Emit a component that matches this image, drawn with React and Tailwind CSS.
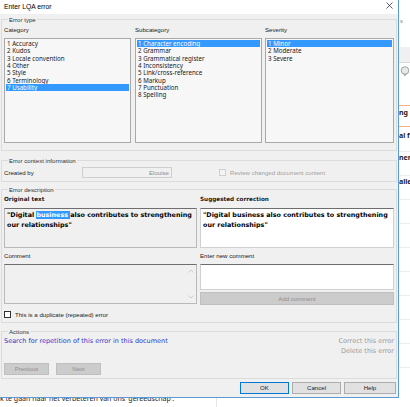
import React from 'react';

const categories = ['1 Accuracy', '2 Kudos', '3 Locale convention', '4 Other', '5 Style', '6 Terminology', '7 Usability'];
const subcategories = [
  '1 Character encoding',
  '2 Grammar',
  '3 Grammatical register',
  '4 Inconsistency',
  '5 Link/cross-reference',
  '6 Markup',
  '7 Punctuation',
  '8 Spelling',
];
const severities = ['1 Minor', '2 Moderate', '3 Severe'];

function ListBox({ items, selected, className = '' }) {
  return (
    <div className={`flex h-[105px] flex-col border border-[#a9a9a9] bg-[#f7f7f7] px-px pt-[1px] font-['Noto_Sans',sans-serif] ${className}`}>
      {items.map((t, i) => (
        <div
          key={t}
          className={`h-[7.33px] shrink-0 whitespace-nowrap pl-[1px] text-[6.2px] leading-[7.33px] ${
            i === selected ? 'bg-[#3399ff] text-white' : 'text-[#1a1a1a]'
          }`}
        >
          {t}
        </div>
      ))}
    </div>
  );
}

function Group({ label, className = '', children }) {
  return (
    <div className={`border border-[#dcdcdc] px-[2px] ${className}`}>
      <div className="-mt-[5px] ml-[4px] h-[9px] w-fit bg-[#f0f0f0] px-px leading-[9px] text-[#333]">{label}</div>
      {children}
    </div>
  );
}

function Checkbox({ disabled }) {
  return (
    <span
      className={`inline-block h-[7px] w-[7px] shrink-0 border ${
        disabled ? 'border-[#cfcfcf] bg-[#f4f4f4]' : 'border-[#333] bg-white'
      }`}
    />
  );
}

function GrayButton({ children, className = '' }) {
  return (
    <div
      className={`flex items-center justify-center border border-[#bfbfbf] bg-[#cccccc] text-[#8e8e8e] ${className}`}
    >
      {children}
    </div>
  );
}

function Dialog() {
  return (
    <div className="flex h-[398px] w-[399px] shrink-0 flex-col border-r border-b border-[#5b9bd5] bg-[#f0f0f0] font-['Liberation_Sans',sans-serif] text-[6.1px] text-[#1a1a1a]">
      {/* title bar */}
      <div className="flex h-[14px] shrink-0 items-center justify-between bg-white pl-[4px] pr-[5px]">
        <span className="text-[6.8px] leading-[14px] text-black">Enter LQA error</span>
        <svg width="7" height="7" viewBox="0 0 7 7" className="mb-[4px]">
          <path d="M0.5 0.5 L6.5 6.5 M6.5 0.5 L0.5 6.5" stroke="#333" strokeWidth="0.8" />
        </svg>
      </div>

      <div className="flex flex-1 flex-col px-px">
        {/* Error type */}
        <Group label="Error type" className="mt-[5px] pb-[7px]">
          <div className="flex gap-[4px]">
            <div className="flex w-[127px] flex-col">
              <div className="mt-[1px] h-[9px] leading-[9px]">Category</div>
              <ListBox items={categories} selected={6} className="mt-[4px]" />
            </div>
            <div className="flex w-[127px] flex-col">
              <div className="mt-[1px] h-[9px] leading-[9px]">Subcategory</div>
              <ListBox items={subcategories} selected={0} className="mt-[4px]" />
            </div>
            <div className="ml-[-1px] flex flex-1 flex-col">
              <div className="mt-[1px] h-[9px] leading-[9px]">Severity</div>
              <ListBox items={severities} selected={0} className="mt-[4px]" />
            </div>
          </div>
        </Group>

        {/* Error context information */}
        <Group label="Error context information" className="mt-[9px] pb-[3px]">
          <div className="mt-[2px] flex h-[11px] items-center">
            <span className="w-[78px]">Created by</span>
            <div className="flex h-[11px] w-[90px] items-center justify-end border border-[#cfcfcf] bg-[#f0f0f0] pr-[2px] text-[#8e8e8e]">
              Elouise
            </div>
            <div className="ml-[47px] flex items-center gap-[4px] text-[#a0a0a0]">
              <Checkbox disabled />
              <span>Review changed document content</span>
            </div>
          </div>
        </Group>

        {/* Error description */}
        <Group label="Error description" className="mt-[7px] pb-[3px]">
          <div className="mt-[1px] grid grid-cols-[193px_1fr] gap-x-[3px]">
            <div className="h-[9px] font-['DejaVu_Sans',sans-serif] text-[5.7px] font-bold leading-[9px]">Original text</div>
            <div className="h-[9px] font-['DejaVu_Sans',sans-serif] text-[5.7px] font-bold leading-[9px]">Suggested correction</div>

            <div className="mt-[4px] h-[40px] border border-[#b9b9b9] border-t-[#6e6e6e] bg-[#f0f0f0] pl-[2px] pt-[1px] font-['DejaVu_Sans',sans-serif] text-[6.4px] font-bold leading-[10px] text-black">
              "Digital <span className="bg-[#3399ff] text-white">business </span>also contributes to strengthening our relationships"
            </div>
            <div className="mt-[4px] h-[40px] border border-[#d0d0d0] border-t-[#6e6e6e] bg-white pl-[2px] pt-[1px] font-['DejaVu_Sans',sans-serif] text-[6.4px] font-bold leading-[10px] text-black">
              "Digital business also contributes to strengthening our relationships"
            </div>

            <div className="mt-[3px] h-[9px] leading-[9px]">Comment</div>
            <div className="mt-[3px] h-[9px] leading-[9px]">Enter new comment</div>

            <div className="mt-[4px] flex h-[40px] border border-[#b9b9b9] border-t-[#6e6e6e] bg-[#f0f0f0]">
              <div className="flex-1" />
              <div className="flex w-[11px] flex-col items-center justify-between py-[4px]">
                <svg width="6" height="4" viewBox="0 0 6 4">
                  <path d="M0.5 3.5 L3 1 L5.5 3.5" stroke="#c4c4c4" strokeWidth="0.8" fill="none" />
                </svg>
                <svg width="6" height="4" viewBox="0 0 6 4">
                  <path d="M0.5 0.5 L3 3 L5.5 0.5" stroke="#c4c4c4" strokeWidth="0.8" fill="none" />
                </svg>
              </div>
            </div>
            <div className="mt-[4px] flex flex-col gap-[2px]">
              <div className="h-[26px] border border-[#d0d0d0] border-t-[#6e6e6e] bg-white" />
              <GrayButton className="h-[13px]">Add comment</GrayButton>
            </div>
          </div>

          <div className="mt-[5px] flex h-[9px] items-center gap-[4px]">
            <Checkbox />
            <span>This is a duplicate (repeated) error</span>
          </div>
        </Group>

        {/* Actions */}
        <Group label="Actions" className="mt-[8px] pb-[3px]">
          <div className="mt-[1px] flex h-[9px] items-center justify-between font-['DejaVu_Sans',sans-serif] text-[6.5px]">
            <span className="text-[#3535c8]">Search for repetition of this error in this document</span>
            <span className="text-[#9a9a9a]">Correct this error</span>
          </div>
          <div className="mt-[1px] flex h-[9px] items-center justify-end font-['DejaVu_Sans',sans-serif] text-[6.5px] text-[#9a9a9a]">
            Delete this error
          </div>
          <div className="mt-[7px] flex h-[12px] gap-[7px]">
            <GrayButton className="w-[45px]">Previous</GrayButton>
            <GrayButton className="w-[45px]">Next</GrayButton>
          </div>
        </Group>

        {/* dialog buttons */}
        <div className="mt-[3px] flex h-[12px] justify-end gap-[3px] pr-[1px]">
          <div className="flex w-[49px] items-center justify-center border border-[#0078d7] bg-[#e1e1e1]">OK</div>
          <div className="flex w-[49px] items-center justify-center border border-[#adadad] bg-[#e1e1e1]">Cancel</div>
          <div className="flex w-[52px] items-center justify-center border border-[#adadad] bg-[#e1e1e1]">Help</div>
        </div>
      </div>
    </div>
  );
}

function PageStrip() {
  return (
    <div className="flex w-[11px] flex-col overflow-hidden bg-white font-['Noto_Sans',sans-serif] text-[7px] text-[#222]">
      <div className="h-[14px]" />
      <div className="h-[33px] pl-[1px] pt-[3px] text-[6px] leading-[8px] text-[#888]">s</div>
      <div className="h-[16px] border-b border-[#dadada] bg-[#f0f0f0]" />
      <div className="flex h-[17px] items-start pl-[1px] pt-[3px]">
        <svg width="10" height="11" viewBox="0 0 10 11">
          <circle cx="5" cy="4.5" r="3.8" fill="#e8e8e8" stroke="#9a9a9a" strokeWidth="0.9" />
          <path d="M3.5 8 L6.5 8 L5 10.5 Z" fill="#9a9a9a" />
        </svg>
      </div>
      <div className="h-[26px] border-b border-[#f4b183]" />
      <div className="h-[21px] whitespace-nowrap border-b border-[#f4b183] pt-[2px] font-bold leading-[9px]">ng</div>
      <div className="h-[24px] whitespace-nowrap pt-[4px] font-bold leading-[9px]">al f</div>
      <div className="h-[24px] whitespace-nowrap border-t border-[#ececec] pt-[1px] font-bold leading-[9px]">ner</div>
      <div className="h-[24px] whitespace-nowrap border-t border-[#ececec] pt-[1px] font-bold leading-[9px]">alle</div>
      <div className="h-[24px] border-t border-[#ececec]" />
      <div className="h-[24px] border-t border-[#ececec]" />
      <div className="h-[24px] border-t border-[#ececec]" />
      <div className="h-[24px] border-t border-[#ececec]" />
      <div className="h-[24px] border-t border-[#ececec]" />
      <div className="h-[24px] border-t border-[#ececec]" />
      <div className="h-[24px] border-t border-[#ececec]" />
      <div className="h-[24px] border-t border-[#ececec]" />
    </div>
  );
}

export default function App() {
  return (
    <div className="flex h-[407px] w-[410px] flex-col overflow-hidden bg-white">
      <div className="flex h-[398px] shrink-0">
        <Dialog />
        <PageStrip />
      </div>
      <div className="flex h-[9px] overflow-hidden">
        <div className="-mt-[4px] whitespace-nowrap font-['Noto_Sans',sans-serif] text-[7px] leading-[10px] text-[#222]">
          k te gaan naar het verbeteren van ons 'gereedschap'.
        </div>
        <div className="ml-[42px] w-px bg-[#e6e6e6]" />
      </div>
    </div>
  );
}
